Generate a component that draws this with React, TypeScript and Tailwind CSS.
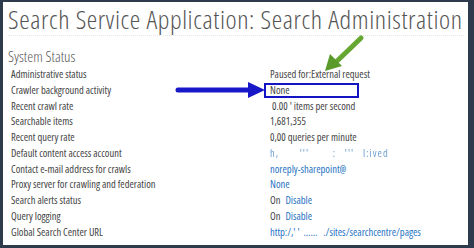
import React from 'react';

const rows: { label: string; value: React.ReactNode }[] = [
  { label: 'Administrative status', value: <span>Paused for:External request</span> },
  { label: 'Crawler background activity', value: <span>None</span> },
  { label: 'Recent crawl rate', value: <span className="pl-[2px]">0.00 ' items per second</span> },
  { label: 'Searchable items', value: <span>1,681,355</span> },
  { label: 'Recent query rate', value: <span>0,00 queries per minute</span> },
  {
    label: 'Default content access account',
    value: <span className="text-[#6f9fd0] blur-[0.6px] tracking-[1px]">h,       '''        :   '''   l:ived</span>,
  },
  { label: 'Contact e-mail address for crawls', value: <span className="text-[#1f74c4]">noreply-sharepoint@</span> },
  { label: 'Proxy server for crawling and federation', value: <span className="text-[#1f74c4]">None</span> },
  {
    label: 'Search alerts status',
    value: (
      <span>
        On <span className="ml-[3px] text-[#1f74c4]">Disable</span>
      </span>
    ),
  },
  {
    label: 'Query logging',
    value: (
      <span>
        On <span className="ml-[3px] text-[#1f74c4]">Disable</span>
      </span>
    ),
  },
  {
    label: 'Global Search Center URL',
    value: <span className="text-[#1f74c4]">http:/,' '  ......   ./sites/searchcentre/pages</span>,
  },
];

export default function App() {
  return (
    <div className="w-[474px] h-[248px] overflow-hidden bg-[#2e3b4d] pt-[2px] pl-[3px]" style={{ fontFamily: '"Open Sans", "Liberation Sans", sans-serif' }}>
      <div className="relative w-[465px] h-[243px] bg-white pl-[5px] text-[#444]">
        <h1 className="whitespace-nowrap text-[26.5px] font-light font-stretch-[75%] tracking-[0.6px] leading-[32px] text-[#555] pt-[1px] border-b border-dotted border-[#e6e6e6] mr-[4px]">
          Search Service Application: Search Administration
        </h1>
        <div className="mt-[11px] text-[15px] leading-[18px] font-light font-stretch-[85%] text-[#555]">System Status</div>
        <div className="mt-[2px] pl-[3px] text-[10.5px] font-stretch-[75%]">
          {rows.map((r) => (
            <div key={r.label} className="flex h-[15.77px] items-center whitespace-pre">
              <div className="w-[259px]">{r.label}</div>
              <div>{r.value}</div>
            </div>
          ))}
        </div>

        {/* blue highlight box */}
        <div className="absolute left-[261px] top-[81px] w-[95px] h-[15px] border-2 border-[#1414c4]" />

        {/* arrows */}
        <svg className="absolute left-0 top-0" width="465" height="243">
          <defs>
            <linearGradient id="g" x1="0" y1="0" x2="1" y2="1">
              <stop offset="0" stopColor="#7cbf3e" />
              <stop offset="1" stopColor="#4f8f25" />
            </linearGradient>
          </defs>
          <line x1="175" y1="88" x2="248" y2="88" stroke="#1818c8" strokeWidth="5" strokeLinecap="round" />
          <polygon points="245,80 262,88 245,96" fill="#1818c8" />
          <line x1="358" y1="36" x2="332" y2="61" stroke="url(#g)" strokeWidth="5" strokeLinecap="round" />
          <polygon points="322,69 327,52 339,64" fill="#5a9a2a" />
        </svg>
      </div>
    </div>
  );
}
